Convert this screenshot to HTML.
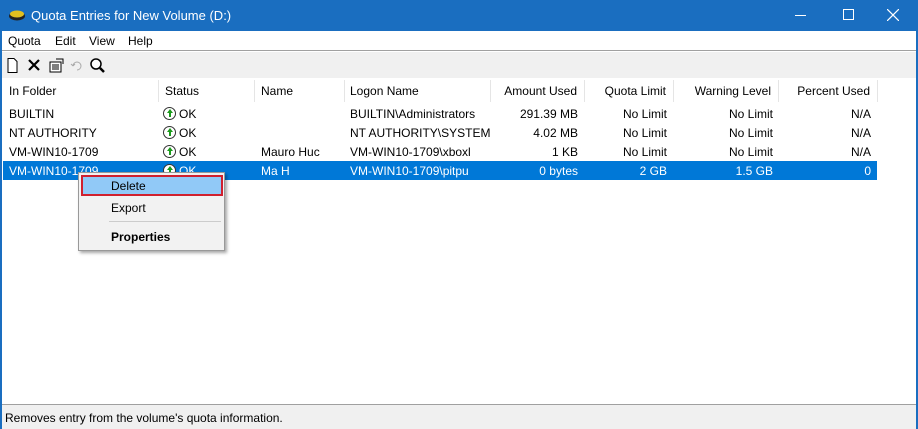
<!DOCTYPE html>
<html><head><style>
*{margin:0;padding:0;box-sizing:border-box}
body{width:918px;height:429px;overflow:hidden;font-family:"Liberation Sans",sans-serif;font-size:12px;color:#000;background:#fff;position:relative}
.title{position:absolute;left:0;top:0;width:918px;height:31px;background:#1a6ec0;color:#fff;font-size:13px}
.title span{position:absolute;left:31px;top:8px}
.frame{position:absolute;top:31px;width:2px;height:398px;background:#1a6ec0}
.menu{position:absolute;left:2px;top:31px;width:914px;height:20px;background:#fff;border-bottom:1px solid #a0a0a0}
.menu span{position:absolute;top:3px}
.tb{position:absolute;left:2px;top:52px;width:914px;height:26px;background:#f0f0f0}
.hdr{position:absolute;top:80px;height:22px;border-right:1px solid #e5e5e5;padding-top:4px}
.c{position:absolute;white-space:nowrap}
.r{text-align:right}
.sel{position:absolute;left:3px;top:161px;width:874px;height:19px;background:#0078d7}
.status{position:absolute;left:2px;top:404px;width:914px;height:25px;background:#f0f0f0;border-top:1px solid #a0a0a0}
.status span{position:absolute;left:3px;top:6px}
.ctx{position:absolute;left:78px;top:172px;width:147px;height:79px;background:#f2f2f2;border:1px solid #999;box-shadow:2px 2px 3px rgba(0,0,0,.35)}
.ok{display:inline-block;width:13px;height:13px;border:1.5px solid #333;border-radius:50%;background:#fff;position:relative;vertical-align:-2px;margin-right:3px}
.ok:after{content:"";position:absolute;left:3px;top:1px;border:3px solid transparent;border-bottom:4px solid #1a9a1a;border-top:0}
.ok:before{content:"";position:absolute;left:4.5px;top:5px;width:2px;height:4px;background:#1a9a1a}
</style></head><body>
<div class="title">
<svg style="position:absolute;left:8px;top:9px" width="18" height="12"><ellipse cx="9" cy="7" rx="8" ry="4.5" fill="#222"/><ellipse cx="9" cy="5" rx="7" ry="3.5" fill="#e0c020"/></svg>
<span>Quota Entries for New Volume (D:)</span>
<div style="position:absolute;left:795px;top:15px;width:11px;height:1px;background:#fff"></div>
<div style="position:absolute;left:843px;top:9px;width:11px;height:11px;border:1px solid #fff"></div>
<svg style="position:absolute;left:887px;top:9px" width="12" height="12"><path d="M0 0L12 12M12 0L0 12" stroke="#fff" stroke-width="1.2"/></svg>
</div>
<div class="frame" style="left:0"></div><div class="frame" style="left:916px"></div>
<div class="menu"><span style="left:6px">Quota</span><span style="left:53px">Edit</span><span style="left:87px">View</span><span style="left:126px">Help</span></div>
<div class="tb">
<svg style="position:absolute;left:4px;top:5px" width="110" height="18">
<path d="M2 1.5H8L11 4.5V15.5H2Z" fill="#fff" stroke="#000"/>
<path d="M23 3L33 13M33 3L23 13" stroke="#000" stroke-width="2.2"/>
<rect x="44" y="5" width="11" height="10" fill="#fff" stroke="#000"/><path d="M46 8h7M46 10h7M46 12h7" stroke="#000"/><path d="M50 2h7v5" fill="none" stroke="#000"/>
<path d="M67 9a4 4 0 1 1 4 4M67 9l-2-2M67 9l2-2" fill="none" stroke="#aaa"/>
<circle cx="90" cy="7" r="5" fill="#fff" stroke="#000" stroke-width="1.5"/><path d="M94 11l4 4" stroke="#000" stroke-width="2.5"/>
</svg></div>
<div class="hdr" style="left:3px;width:156px;padding-left:6px">In Folder</div>
<div class="hdr" style="left:159px;width:96px;padding-left:6px">Status</div>
<div class="hdr" style="left:255px;width:90px;padding-left:6px">Name</div>
<div class="hdr" style="left:345px;width:146px;padding-left:5px">Logon Name</div>
<div class="hdr r" style="left:491px;width:94px;padding-right:7px">Amount Used</div>
<div class="hdr r" style="left:585px;width:89px;padding-right:7px">Quota Limit</div>
<div class="hdr r" style="left:674px;width:105px;padding-right:7px">Warning Level</div>
<div class="hdr r" style="left:779px;width:99px;padding-right:7px">Percent Used</div>
<div class="sel"></div>
<div style="position:absolute;left:0;top:107px;width:918px">
<div style="position:absolute;top:0"><div class="c" style="left:9px">BUILTIN</div><div class="c" style="left:163px"><i class="ok"></i>OK</div><div class="c" style="left:350px">BUILTIN\Administrators</div><div class="c r" style="left:491px;width:87px">291.39 MB</div><div class="c r" style="left:585px;width:82px">No Limit</div><div class="c r" style="left:674px;width:99px">No Limit</div><div class="c r" style="left:779px;width:92px">N/A</div></div>
<div style="position:absolute;top:19px"><div class="c" style="left:9px">NT AUTHORITY</div><div class="c" style="left:163px"><i class="ok"></i>OK</div><div class="c" style="left:350px">NT AUTHORITY\SYSTEM</div><div class="c r" style="left:491px;width:87px">4.02 MB</div><div class="c r" style="left:585px;width:82px">No Limit</div><div class="c r" style="left:674px;width:99px">No Limit</div><div class="c r" style="left:779px;width:92px">N/A</div></div>
<div style="position:absolute;top:38px"><div class="c" style="left:9px">VM-WIN10-1709</div><div class="c" style="left:163px"><i class="ok"></i>OK</div><div class="c" style="left:261px">Mauro Huc</div><div class="c" style="left:350px">VM-WIN10-1709\xboxl</div><div class="c r" style="left:491px;width:87px">1 KB</div><div class="c r" style="left:585px;width:82px">No Limit</div><div class="c r" style="left:674px;width:99px">No Limit</div><div class="c r" style="left:779px;width:92px">N/A</div></div>
<div style="position:absolute;top:57px;color:#fff"><div class="c" style="left:9px">VM-WIN10-1709</div><div class="c" style="left:163px"><i class="ok"></i>OK</div><div class="c" style="left:261px">Ma H</div><div class="c" style="left:350px">VM-WIN10-1709\pitpu</div><div class="c r" style="left:491px;width:87px">0 bytes</div><div class="c r" style="left:585px;width:82px">2 GB</div><div class="c r" style="left:674px;width:99px">1.5 GB</div><div class="c r" style="left:779px;width:92px">0</div></div>
</div>
<div class="ctx">
<div style="position:absolute;left:2px;top:2px;width:142px;height:21px;background:#91c9f7;border:2.5px solid #d0202e"></div>
<div class="c" style="left:32px;top:6px">Delete</div>
<div class="c" style="left:32px;top:28px">Export</div>
<div style="position:absolute;left:30px;top:48px;width:112px;height:1px;background:#ccc"></div>
<div class="c" style="left:32px;top:57px;font-weight:bold">Properties</div>
</div>
<div class="status"><span>Removes entry from the volume's quota information.</span></div>
</body></html>
